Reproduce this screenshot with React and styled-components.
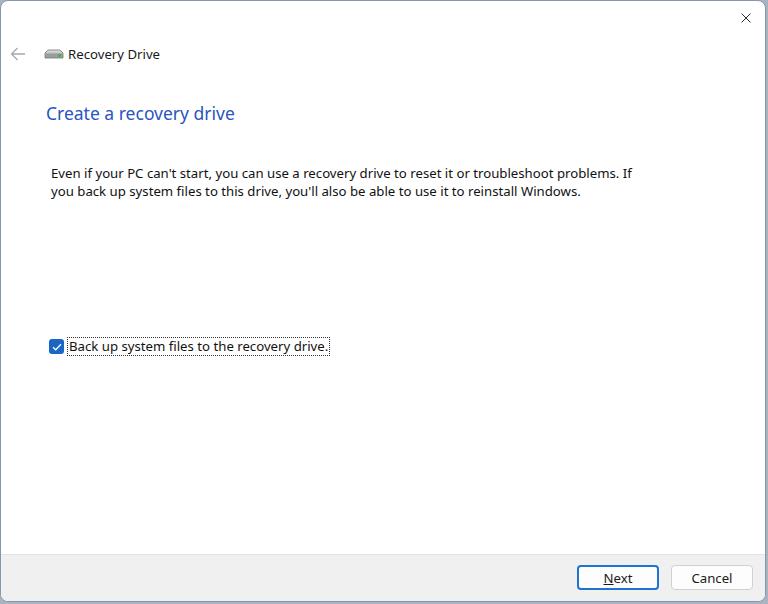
import React, { useState } from "react";
import styled, { createGlobalStyle } from "styled-components";

const GlobalStyle = createGlobalStyle`
  html, body {
    margin: 0;
    padding: 0;
    background: #a9b3c1;
  }
  body {
    font-family: "Noto Sans", "Open Sans", sans-serif;
  }
`;

const Window = styled.div`
  box-sizing: border-box;
  width: 766px;
  height: 602px;
  display: flex;
  flex-direction: column;
  background: #ffffff;
  border: 1px solid #8796ab;
  border-radius: 8px;
  overflow: hidden;
`;

const TitleBar = styled.div`
  height: 35px;
  display: flex;
  justify-content: flex-end;
  align-items: flex-start;
`;

const CloseButton = styled.button`
  width: 38px;
  height: 32px;
  border: none;
  background: transparent;
  display: flex;
  align-items: center;
  justify-content: center;
  padding: 0;
  margin-top: 1px;
  cursor: default;
  &:hover {
    background: #c42b1c;
  }
`;

const NavRow = styled.div`
  height: 36px;
  display: flex;
  align-items: center;
  padding-left: 9px;
`;

const BackButton = styled.span`
  width: 18px;
  display: flex;
  align-items: center;
  margin-right: 16px;
`;

const NavTitle = styled.span`
  font-size: 13.2px;
  color: #1a1a1a;
  margin-left: 4px;
`;

const Content = styled.div`
  flex: 1;
  padding: 28px 0 0 45px;
`;

const Heading = styled.h1`
  margin: 0;
  font-weight: 400;
  font-size: 17.5px;
  line-height: 26px;
  color: #2855c0;
`;

const Description = styled.p`
  margin: 38px 0 0 5px;
  font-size: 13.2px;
  line-height: 18px;
  color: #111;
  width: 600px;
`;

const CheckRow = styled.label`
  display: flex;
  align-items: center;
  margin: 137px 0 0 3px;
  gap: 3px;
`;

const Box = styled.span`
  width: 15px;
  height: 15px;
  border-radius: 3px;
  background: ${(p) => (p.checked ? "#1a66c4" : "#fff")};
  border: ${(p) => (p.checked ? "none" : "1px solid #666")};
  display: flex;
  align-items: center;
  justify-content: center;
`;

const CheckText = styled.span`
  font-size: 13.2px;
  line-height: 17px;
  color: #111;
  padding: 0 1px;
  border: 1px dotted #333;
`;

const Footer = styled.div`
  box-sizing: border-box;
  height: 47px;
  border-top: 1px solid #e3e3e3;
  background: #f0f0f0;
  display: flex;
  justify-content: flex-end;
  align-items: flex-start;
  padding: 10px 12px 0 0;
  gap: 12px;
`;

const Button = styled.button`
  box-sizing: border-box;
  width: 82px;
  height: 25px;
  font-family: "Noto Sans", "Open Sans", sans-serif;
  font-size: 13.2px;
  color: #1a1a1a;
  background: #fdfdfd;
  border-radius: 4px;
  border: ${(p) => (p.primary ? "2px solid #1f74d0" : "1px solid #d0d0d0")};
  padding: 0;
  u {
    text-decoration-thickness: 1px;
  }
`;

const DriveIcon = () => (
  <svg width="20" height="10" viewBox="0 0 20 10">
    <defs>
      <linearGradient id="drv" x1="0" y1="0" x2="0" y2="1">
        <stop offset="0" stopColor="#e6e6e6" />
        <stop offset="0.5" stopColor="#b8b8b8" />
        <stop offset="1" stopColor="#8c8c8c" />
      </linearGradient>
    </defs>
    <path d="M2 3 Q3 1 5 1 H15 Q17 1 18 3 L19 4 V9 H1 V4 Z" fill="url(#drv)" stroke="#6e6e6e" strokeWidth="0.8" />
    <rect x="1.5" y="4.5" width="17" height="4" fill="#9c9c9c" />
    <rect x="14" y="5.2" width="3" height="2.6" fill="#2fbf2f" />
  </svg>
);

const App = () => {
  const [backup, setBackup] = useState(true);

  return (
    <>
      <GlobalStyle />
      <Window>
        <TitleBar>
          <CloseButton aria-label="Close">
            <svg width="10" height="10" viewBox="0 0 10 10">
              <path d="M0.5 0.5 L9.5 9.5 M9.5 0.5 L0.5 9.5" stroke="#2b2b2b" strokeWidth="1" />
            </svg>
          </CloseButton>
        </TitleBar>
        <NavRow>
          <BackButton>
            <svg width="16" height="14" viewBox="0 0 16 14">
              <path d="M15 7 H1.5 M7.5 1 L1.5 7 L7.5 13" fill="none" stroke="#a8a8a8" strokeWidth="1.3" />
            </svg>
          </BackButton>
          <DriveIcon />
          <NavTitle>Recovery Drive</NavTitle>
        </NavRow>
        <Content>
          <Heading>Create a recovery drive</Heading>
          <Description>
            Even if your PC can't start, you can use a recovery drive to reset it or troubleshoot problems. If you back up system files to this drive, you'll also be able to use it to reinstall Windows.
          </Description>
          <CheckRow onClick={() => setBackup(!backup)}>
            <Box checked={backup}>
              {backup && (
                <svg width="10" height="8" viewBox="0 0 10 8">
                  <path d="M1 4.2 L3.7 6.8 L9 1.2" fill="none" stroke="#fff" strokeWidth="1.3" />
                </svg>
              )}
            </Box>
            <CheckText>Back up system files to the recovery drive.</CheckText>
          </CheckRow>
        </Content>
        <Footer>
          <Button primary>
            <u>N</u>ext
          </Button>
          <Button>Cancel</Button>
        </Footer>
      </Window>
    </>
  );
};

export default App;
